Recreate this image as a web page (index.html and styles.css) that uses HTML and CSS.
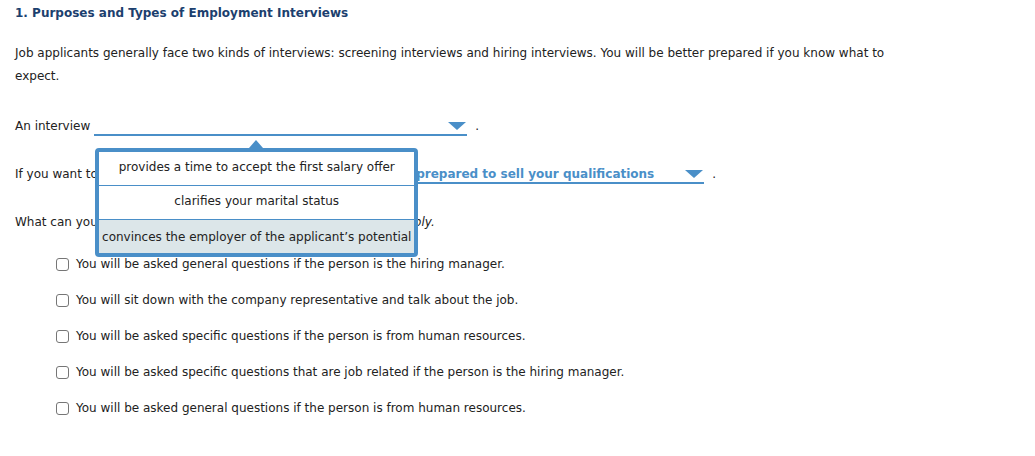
FILE: index.html
```html
<!DOCTYPE html>
<html>
<head>
<meta charset="utf-8">
<link rel="stylesheet" href="styles.css">
</head>
<body>
<div class="page">
  <h1 class="title">1. Purposes and Types of Employment Interviews</h1>
  <p class="intro">Job applicants generally face two kinds of interviews: screening interviews and hiring interviews. You will be better prepared if you know what to expect.</p>

  <div class="row">
    <span class="label">An interview</span>
    <span class="select select-one">
      <span class="sel-text">&nbsp;</span>
      <svg class="arrow" width="18" height="8" viewBox="0 0 18 8"><path d="M0 0H18L9 8Z" fill="#4a8fc8"/></svg>
      <span class="popup">
        <span class="caret"></span>
        <span class="option">provides a time to accept the first salary offer</span>
        <span class="option">clarifies your marital status</span>
        <span class="option option-hl">convinces the employer of the applicant’s potential</span>
      </span>
    </span>
    <span class="dot">.</span>
  </div>

  <div class="row">
    <span class="label">If you want to land the job you’re interviewing for, you should be</span>
    <span class="select select-two">
      <span class="sel-text chosen">prepared to sell your qualifications</span>
      <svg class="arrow" width="18" height="8" viewBox="0 0 18 8"><path d="M0 0H18L9 8Z" fill="#4a8fc8"/></svg>
    </span>
    <span class="dot">.</span>
  </div>

  <div class="row">
    <span class="label">What can you expect during a second interview? <i>Check all that apply.</i></span>
  </div>

  <ul class="choices">
    <li class="choice"><span class="box"></span>You will be asked general questions if the person is the hiring manager.</li>
    <li class="choice"><span class="box"></span>You will sit down with the company representative and talk about the job.</li>
    <li class="choice"><span class="box"></span>You will be asked specific questions if the person is from human resources.</li>
    <li class="choice"><span class="box"></span>You will be asked specific questions that are job related if the person is the hiring manager.</li>
    <li class="choice"><span class="box"></span>You will be asked general questions if the person is from human resources.</li>
  </ul>
</div>
</body>
</html>
```

FILE: styles.css
```css
html, body {
  margin: 0;
  padding: 0;
  background: #ffffff;
}
body {
  font-family: "DejaVu Sans", Verdana, sans-serif;
  font-size: 12px;
  color: #222222;
}
.page {
  padding: 4px 15px 0 15px;
}
.title {
  margin: 0;
  font-size: 12px;
  line-height: 18px;
  font-weight: bold;
  color: #1c3f6e;
}
.intro {
  margin: 20px 0 0 0;
  line-height: 23px;
  max-width: 900px;
}
.row {
  display: flex;
  align-items: baseline;
  height: 24px;
  line-height: 24px;
  margin-top: 24px;
  white-space: nowrap;
}
.row:nth-of-type(1) { margin-top: 26px; }
.label {
  margin-right: 4px;
}
.select {
  position: relative;
  display: inline-flex;
  align-items: baseline;
  border-bottom: 2px solid #4a8fc8;
  line-height: 16px;
  padding-bottom: 0;
}
.select-one { width: 373px; }
.select-two {
  width: 290px;
  margin-left: 5px;
}
.sel-text {
  flex: 1;
  padding-left: 2px;
}
.chosen {
  font-weight: bold;
  color: #4a8fc8;
}
.arrow {
  align-self: center;
  margin-right: 1px;
}
.dot {
  margin-left: 8px;
}
.popup {
  position: absolute;
  left: 1px;
  top: 30px;
  width: 315px;
  border: 4px solid #4a8fc8;
  border-radius: 4px;
  background: #ffffff;
  display: flex;
  flex-direction: column;
  z-index: 5;
}
.caret {
  position: absolute;
  left: 150px;
  top: -12px;
  width: 0;
  height: 0;
  border-left: 7px solid transparent;
  border-right: 7px solid transparent;
  border-bottom: 8px solid #4a8fc8;
}
.option {
  display: block;
  height: 33px;
  line-height: 30px;
  text-align: center;
  border-bottom: 1px solid #4a8fc8;
  color: #222222;
  white-space: nowrap;
}
.option-hl {
  background: #dce6e9;
  border-bottom: none;
  line-height: 34px;
}
.choices {
  list-style: none;
  margin: 18px 0 0 0;
  padding: 0 0 0 41px;
  display: flex;
  flex-direction: column;
  gap: 12px;
}
.choice {
  display: flex;
  align-items: center;
  height: 24px;
}
.box {
  width: 11px;
  height: 11px;
  border: 1px solid #767676;
  border-radius: 3px;
  margin-right: 7px;
  background: #ffffff;
}
```
